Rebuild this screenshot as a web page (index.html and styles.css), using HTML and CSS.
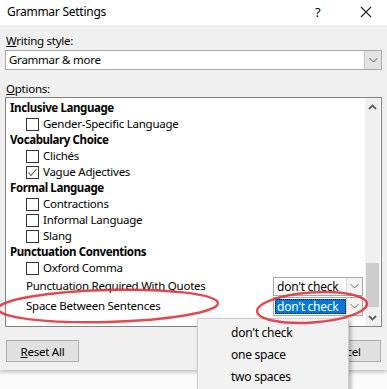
FILE: index.html
```html
<!DOCTYPE html>
<html>
<head>
<meta charset="utf-8">
<link rel="stylesheet" href="styles.css">
</head>
<body>
<div class="dialog">
  <div class="titlebar">
    <span class="title">Grammar Settings</span>
    <span class="help">?</span>
    <span class="close">
      <svg width="12" height="12" viewBox="0 0 12 12"><path d="M1 1 L11 11 M11 1 L1 11" stroke="#222" stroke-width="1.1" fill="none"/></svg>
    </span>
  </div>
  <div class="body">
    <div class="label label-first"><u>W</u>riting style:</div>
    <div class="select">
      <span class="select-text">Grammar &amp; more</span>
      <span class="select-btn"><svg width="9" height="6" viewBox="0 0 9 6"><polyline points="0.5,1 4.5,5 8.5,1" stroke="#666" stroke-width="1" fill="none"/></svg></span>
    </div>
    <div class="label label-second"><u>O</u>ptions:</div>
    <div class="listbox">
      <div class="list">
        <div class="row head">Inclusive Language</div>
        <div class="row item"><span class="cb"></span>Gender-Specific Language</div>
        <div class="row head">Vocabulary Choice</div>
        <div class="row item"><span class="cb"></span>Clichés</div>
        <div class="row item"><span class="cb"><svg width="11" height="11" viewBox="0 0 11 11"><polyline points="1.5,5.5 4,8.5 9.5,2" stroke="#555" stroke-width="1.1" fill="none"/></svg></span>Vague Adjectives</div>
        <div class="row head">Formal Language</div>
        <div class="row item"><span class="cb"></span>Contractions</div>
        <div class="row item"><span class="cb"></span>Informal Language</div>
        <div class="row item"><span class="cb"></span>Slang</div>
        <div class="row head">Punctuation Conventions</div>
        <div class="row item"><span class="cb"></span>Oxford Comma</div>
        <div class="row combo-row">
          <span class="combo-label">Punctuation Required With Quotes</span>
          <span class="combo">
            <span class="combo-text">don't check</span>
            <span class="combo-btn"><svg width="9" height="6" viewBox="0 0 9 6"><polyline points="0.5,1 4.5,5 8.5,1" stroke="#777" stroke-width="1" fill="none"/></svg></span>
          </span>
        </div>
        <div class="row combo-row">
          <span class="combo-label">Space Between Sentences</span>
          <span class="combo">
            <span class="combo-text selected">don't check</span>
            <span class="combo-btn"><svg width="9" height="6" viewBox="0 0 9 6"><polyline points="0.5,1 4.5,5 8.5,1" stroke="#777" stroke-width="1" fill="none"/></svg></span>
          </span>
        </div>
      </div>
      <div class="scrollbar">
        <span class="arrow up"><svg width="9" height="6" viewBox="0 0 9 6"><polyline points="1,5 4.5,1.5 8,5" stroke="#606060" stroke-width="1.8" fill="none"/></svg></span>
        <span class="track"><span class="thumb"></span></span>
        <span class="arrow down"><svg width="9" height="6" viewBox="0 0 9 6"><polyline points="1,1 4.5,4.5 8,1" stroke="#606060" stroke-width="1.8" fill="none"/></svg></span>
      </div>
    </div>
    <div class="buttons">
      <span class="btn"><u>R</u>eset All</span>
      <span class="spacer"></span>
      <span class="btn btn-cancel">Cancel</span>
    </div>
  </div>
</div>
<div class="popup">
  <div class="popup-item">don't check</div>
  <div class="popup-item">one space</div>
  <div class="popup-item">two spaces</div>
</div>
<svg class="marks" width="387" height="389" viewBox="0 0 387 389">
  <ellipse cx="108" cy="306" rx="110" ry="16" transform="rotate(-1.5 108 306)" stroke="#e0353d" stroke-width="2.4" fill="none" opacity="0.9"/>
  <ellipse cx="312" cy="307.5" rx="55" ry="15" transform="rotate(-4 312 307.5)" stroke="#e0353d" stroke-width="2.4" fill="none" opacity="0.9"/>
</svg>
</body>
</html>
```
FILE: styles.css
```css
html, body {
  margin: 0;
  padding: 0;
}
body {
  width: 387px;
  height: 389px;
  overflow: hidden;
  position: relative;
  background: #fbfbfb;
  font-family: "Noto Sans", "Open Sans", sans-serif;
  font-size: 11.5px;
  letter-spacing: -0.25px;
  color: #000;
}
.dialog {
  height: 370px;
  background: #f0f0f0;
  box-shadow: 0 2px 4px rgba(0,0,0,0.25);
}
.titlebar {
  height: 25px;
  background: #fff;
  display: flex;
  align-items: center;
  padding-left: 7px;
}
.title {
  font-size: 12px;
  flex: 1;
  margin-top: -2px;
}
.help {
  width: 14px;
  font-size: 13px;
  margin-right: 31px;
  margin-top: -2px;
}
.close {
  width: 12px;
  margin-right: 15px;
  display: flex;
  margin-top: -2px;
}
.body {
  padding: 0 5px;
}
.label {
  height: 16px;
  line-height: 16px;
  padding-left: 1px;
}
.label-first {
  margin-top: 8px;
  margin-bottom: 1px;
}
.label-second {
  margin-top: 11px;
}
.select {
  height: 20px;
  box-sizing: border-box;
  border: 1px solid #a8a8a8;
  background: #fff;
  display: flex;
  align-items: stretch;
}
.select-text {
  flex: 1;
  line-height: 18px;
  padding-left: 3px;
}
.select-btn {
  width: 16px;
  background: #e3e3e3;
  border-left: 1px solid #c8c8c8;
  display: flex;
  align-items: center;
  justify-content: center;
}
.listbox {
  height: 230px;
  box-sizing: border-box;
  border: 1px solid #828282;
  background: #fff;
  display: flex;
}
.list {
  flex: 1;
  padding-top: 2px;
}
.row {
  height: 16px;
  line-height: 16px;
  display: flex;
  align-items: center;
  white-space: nowrap;
}
.head {
  font-weight: bold;
  padding-left: 4px;
  letter-spacing: -0.4px;
}
.item {
  padding-left: 20px;
}
.cb {
  width: 13px;
  height: 13px;
  box-sizing: border-box;
  border: 1px solid #333;
  background: #fff;
  margin-right: 4px;
  display: flex;
  align-items: center;
  justify-content: center;
  flex: none;
}
.combo-row {
  height: 20px;
  padding-left: 20px;
  padding-right: 2px;
}
.combo-row:first-of-type {
  margin-top: 1px;
}
.combo-label {
  flex: 1;
}
.combo {
  width: 90px;
  height: 19px;
  box-sizing: border-box;
  border: 1px solid #a8a8a8;
  background: #fff;
  display: flex;
  align-items: stretch;
}
.combo-text {
  flex: 1;
  line-height: 17px;
  padding-left: 3px;
  margin: 0;
  font-size: 12px;
}
.combo-text.selected {
  background: #0078d7;
  color: #fff;
  margin: 1px 0 1px 1px;
  line-height: 15px;
  padding-left: 2px;
  outline: 1px dotted #000;
  outline-offset: -1px;
}
.combo-btn {
  width: 15px;
  display: flex;
  align-items: center;
  justify-content: center;
  background: #f4f4f4;
  border-left: 1px solid #dcdcdc;
}
.scrollbar {
  width: 15px;
  background: #f0f0f0;
  display: flex;
  flex-direction: column;
  margin-right: 1px;
}
.arrow {
  height: 17px;
  display: flex;
  align-items: center;
  justify-content: center;
}
.track {
  flex: 1;
  display: flex;
  flex-direction: column;
  justify-content: flex-end;
  padding: 0 1px;
}
.thumb {
  height: 44px;
  background: #cdcdcd;
  margin-bottom: 2px;
}
.buttons {
  margin-top: 13px;
  display: flex;
  padding-left: 1px;
}
.btn {
  width: 73px;
  height: 22px;
  box-sizing: border-box;
  border: 1px solid #adadad;
  background: #e1e1e1;
  display: flex;
  align-items: center;
  justify-content: center;
}
.spacer {
  flex: 1;
}
.btn-cancel {
  width: 75px;
  margin-right: 1px;
}
.popup {
  position: absolute;
  left: 197px;
  top: 318px;
  width: 152px;
  height: 80px;
  box-sizing: border-box;
  background: #f2f2f2;
  border: 1px solid #cfcfcf;
  box-shadow: 2px 2px 4px rgba(0,0,0,0.3);
  padding-top: 3px;
}
.popup-item {
  height: 22px;
  line-height: 22px;
  padding-left: 33px;
  font-size: 12px;
}
.marks {
  position: absolute;
  left: 0;
  top: 0;
  pointer-events: none;
}
```
